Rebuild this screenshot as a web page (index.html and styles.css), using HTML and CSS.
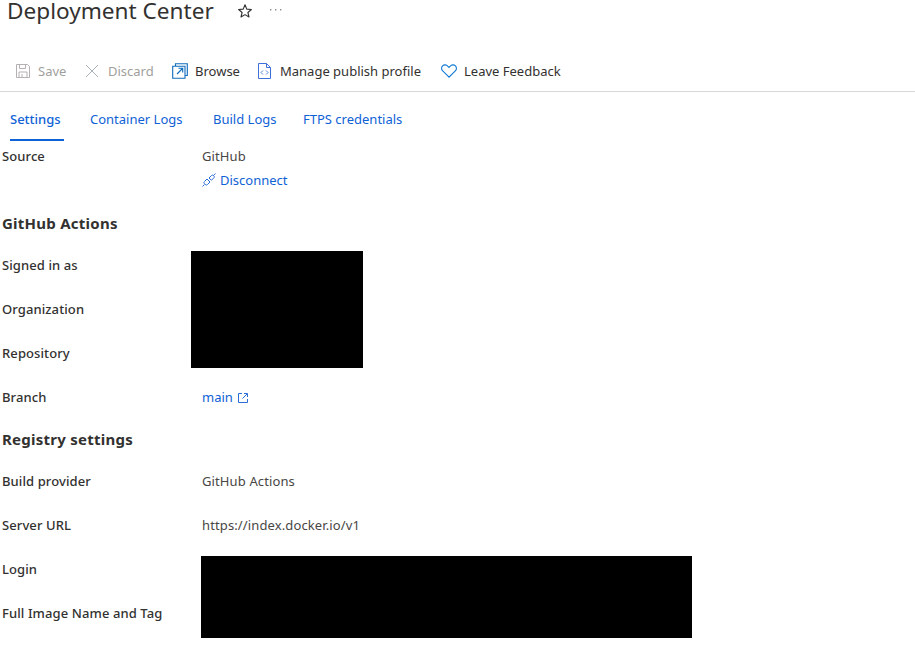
FILE: index.html
```html
<!DOCTYPE html>
<html lang="en">
<head>
<meta charset="utf-8">
<title>Deployment Center</title>
<link rel="stylesheet" href="styles.css">
</head>
<body>
<header class="title-bar">
  <h1 class="title">Deployment Center</h1>
  <svg class="star" width="16" height="16" viewBox="0 0 16 16"><path d="M8 1.8l1.8 4.3 4.6.4-3.5 3 1.1 4.5L8 11.6 4 14l1.1-4.5-3.5-3 4.6-.4z" fill="none" stroke="#323130" stroke-width="1.1" stroke-linejoin="round"/></svg>
  <svg class="more" width="12" height="3" viewBox="0 0 12 3" fill="#8a8886"><rect x="0" y="1" width="1.4" height="1.4"/><rect x="5" y="1" width="1.4" height="1.4"/><rect x="10" y="1" width="1.4" height="1.4"/></svg>
</header>
<nav class="toolbar">
  <span class="cmd disabled cmd-save">
    <svg width="14" height="14" viewBox="0 0 14 14" fill="none" stroke="#b4b2b0"><path d="M.5.5h11l2 2v11H.5z"/><path d="M3.5.5v4h6v-4M3 13.5V8h8v5.5M6 10v3.5"/></svg>
    Save</span>
  <span class="cmd disabled cmd-discard">
    <svg width="14" height="14" viewBox="0 0 14 14" fill="none" stroke="#a8b0b8"><path d="M1 1l12 12M13 1L1 13"/></svg>
    Discard</span>
  <span class="cmd cmd-browse">
    <svg width="16" height="16" viewBox="0 0 16 16" fill="none" stroke="#0f6cbd" stroke-width="1.1"><path d="M3.5 3V.8h11.8v11.7h-2.2"/><path d="M.7 3.2h12.3v12.1H.7z"/><path d="M5 11l5.5-5.5M6.5 5.3h4.2v4.2"/></svg>
    Browse</span>
  <span class="cmd cmd-publish">
    <svg width="13" height="16" viewBox="0 0 13 16" fill="none" stroke="#3f6fd8"><path d="M.5.5h8l4 4v11H.5z"/><path d="M8.5.5v4h4"/><path d="M5 7.5L3 9.5l2 2M8 7.5l2 2-2 2" stroke-width=".9"/></svg>
    Manage publish profile</span>
  <span class="cmd cmd-feedback">
    <svg width="16" height="14" viewBox="0 0 16 14" fill="none" stroke="#0f78d4" stroke-width="1.1"><path d="M8 13.2L1.7 6.9C.1 5.3.3 3 1.6 1.8c1.6-1.4 3.9-1.1 5.1.3L8 3.4l1.3-1.3c1.2-1.4 3.5-1.7 5.1-.3 1.3 1.2 1.5 3.5-.1 5.1z"/></svg>
    Leave Feedback</span>
</nav>
<div class="tabs">
  <a class="tab active">Settings</a>
  <a class="tab tab-logs">Container Logs</a>
  <a class="tab tab-build">Build Logs</a>
  <a class="tab tab-ftps">FTPS credentials</a>
</div>
<main class="content">
  <div class="source-row">
    <div class="label">Source</div>
    <div class="value">
      <div>GitHub</div>
      <a class="link disconnect">
        <svg width="14" height="14" viewBox="0 0 14 14" fill="none" stroke="#2b6fd6"><path d="M.5 13.5L2.5 11.5M11.5 2.5L13.5.5"/><path d="M2.5 8.5L5 6l3 3-2.5 2.5a1.6 1.6 0 0 1-2.3 0l-.7-.7a1.6 1.6 0 0 1 0-2.3z"/><path d="M7 5l2.5-2.5a1.6 1.6 0 0 1 2 0 1.6 1.6 0 0 1 .6 2L9.5 7.2z"/></svg>
        Disconnect</a>
    </div>
  </div>
  <h2 class="section first">GitHub Actions</h2>
  <div class="row"><div class="label">Signed in as</div><div class="value"></div></div>
  <div class="row"><div class="label">Organization</div><div class="value"></div></div>
  <div class="row"><div class="label">Repository</div><div class="value"></div></div>
  <div class="row"><div class="label">Branch</div><div class="value"><a class="link">main
    <svg class="ext" width="10" height="10" viewBox="0 0 10 10" fill="none" stroke="#2b6fd6"><path d="M4 .5H.5v9h9V6M6 .5h3.5V4M9.2.8L4.5 5.5"/></svg></a></div></div>
  <h2 class="section second">Registry settings</h2>
  <div class="row"><div class="label">Build provider</div><div class="value">GitHub Actions</div></div>
  <div class="row"><div class="label">Server URL</div><div class="value">https://index.docker.io/v1</div></div>
  <div class="row"><div class="label">Login</div><div class="value"></div></div>
  <div class="row"><div class="label">Full Image Name and Tag</div><div class="value"></div></div>
  <div class="redact redact-a"></div>
  <div class="redact redact-b"></div>
</main>
</body>
</html>
```
FILE: styles.css
```css
* { box-sizing: border-box; }
html, body { margin: 0; padding: 0; background: #fff; overflow: hidden; }
body {
  width: 915px; height: 660px;
  font-family: "Noto Sans", "Open Sans", sans-serif;
  font-size: 13px; line-height: 18px; color: #323130;
  position: relative;
}
.title-bar { height: 50px; display: flex; align-items: flex-start; padding-left: 7px; }
.title { margin: 0; font-size: 22.6px; line-height: 21px; font-weight: 400; white-space: nowrap; width: 230px; }
.star { margin: 3px 0 0; flex: none; }
.more { margin: 8px 0 0 17px; flex: none; }
.toolbar { height: 42px; border-bottom: 1px solid #d8d8d8; display: flex; align-items: center; padding: 1px 0 0 16px; white-space: nowrap; }
.cmd { display: flex; align-items: center; gap: 8px; }
.disabled { color: #a19f9d; }
.cmd-save { width: 69px; }
.cmd-discard { width: 87px; gap: 9px; }
.cmd-browse { width: 86px; gap: 7px; }
.cmd-publish { width: 183px; gap: 9px; }
.cmd-feedback { gap: 7px; }
.tabs { display: flex; height: 49px; padding-left: 10px; color: #0f62d6; }
.tab { padding-top: 18px; height: 49px; white-space: nowrap; }
.tab.active { width: 54px; font-weight: 500; border-bottom: 2px solid #0f62d6; }
.tab-logs { margin-left: 26px; width: 123px; }
.tab-build { width: 90px; }
.content { position: relative; padding-left: 2px; }
.source-row { display: flex; padding-top: 6px; height: 62px; }
.label { width: 200px; font-weight: 500; white-space: nowrap; letter-spacing: .1px; }
.value { white-space: nowrap; color: #484644; letter-spacing: .12px; }
.link { color: #0f62d6; letter-spacing: 0; }
.disconnect { display: flex; align-items: center; gap: 4px; margin-top: 6px; }
.section { margin: 0; font-size: 15px; line-height: 20px; font-weight: 700; letter-spacing: .25px; }
.section.first { padding-top: 10px; padding-bottom: 19px; height: 49px; }
.section.second { height: 20px; margin-top: 1px; margin-bottom: 19px; }
.row { display: flex; height: 44px; padding-top: 4px; }
.ext { margin-left: 2px; vertical-align: -1px; }
.redact { position: absolute; background: #000; }
.redact-a { left: 191px; top: 110px; width: 172px; height: 117px; }
.redact-b { left: 201px; top: 415px; width: 491px; height: 82px; }
```
